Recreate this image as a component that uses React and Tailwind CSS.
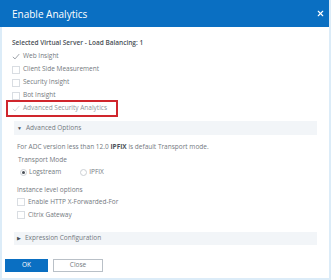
import { X } from "lucide-react";

function Check({ checked, faded }) {
  return (
    <span className={`w-[8px] h-[8px] flex items-center justify-center ${checked ? "" : "border border-[#d9dde2] bg-white"}`}>
      {checked && (
        <svg viewBox="0 0 10 10" className="w-[9px] h-[9px]">
          <path d="M1 5.5 L3.8 8 L9 2" fill="none" stroke={faded ? "#c9ced4" : "#858b93"} strokeWidth="1" />
        </svg>
      )}
    </span>
  );
}

function CheckRow({ label, checked, faded }) {
  return (
    <div className="h-[13px] flex items-center gap-[3px]">
      <Check checked={checked} faded={faded} />
      <span className={faded ? "text-[#8e959c]" : "text-[#737980]"}>{label}</span>
    </div>
  );
}

function Radio({ label, on }) {
  return (
    <div className="flex items-center gap-[2px]">
      <span className="w-[7px] h-[7px] rounded-full border border-[#cbd0d5] bg-white flex items-center justify-center">
        {on && <span className="w-[3px] h-[3px] rounded-full bg-[#4a5057]" />}
      </span>
      <span className="text-[#737980]">{label}</span>
    </div>
  );
}

export default function App() {
  return (
    <div className="w-[331px] h-[280px] bg-[#dcecf8] overflow-hidden" style={{ fontFamily: "'Open Sans', 'Noto Sans', sans-serif" }}>
      <div className="w-[329px] h-[278px] bg-white flex flex-col">
        {/* header */}
        <div className="h-[27px] bg-[#0a6fc2] flex items-center justify-between pl-[12px] pr-[4px]">
          <span className="text-white text-[10px] leading-none">Enable Analytics</span>
          <X className="w-[9px] h-[9px] text-white" strokeWidth={3} />
        </div>

        <div className="flex-1 border-l-2 border-[#dcecf8] flex flex-col text-[6.5px] leading-none">
          <div className="pl-[10px] pt-[10px]">
            <div className="h-[13px] flex items-center text-[#4a5057] font-semibold">
              Selected Virtual Server - Load Balancing: 1
            </div>
            <CheckRow label="Web Insight" checked />
            <CheckRow label="Client Side Measurement" />
            <CheckRow label="Security Insight" />
            <CheckRow label="Bot Insight" />
            <div className="relative">
              <CheckRow label="Advanced Security Analytics" checked faded />
              <span className="absolute -left-[6px] -top-[2px] w-[112px] h-[17px] border-2 border-[#d0262d]" />
            </div>

            {/* advanced options */}
            <div className="mt-[6px] ml-[2px] w-[303px] h-[14px] bg-[#f2f5f8] flex items-center pl-[3px] gap-[4px] text-[#737980]">
              <span className="text-[5px] text-[#4a5057]">▼</span>
              <span>Advanced Options</span>
            </div>
            <div className="pl-[5px] text-[#737980]">
              <div className="mt-[7px] h-[10px] flex items-center">
                For ADC version less than 12.0&nbsp;<b className="text-[#4a5057]">IPFIX</b>&nbsp;is default Transport mode.
              </div>
              <div className="mt-[3px] h-[10px] flex items-center pl-[1px]">Transport Mode</div>
              <div className="mt-[2px] h-[10px] flex items-center pl-[3px] gap-[19px]">
                <Radio label="Logstream" on />
                <Radio label="IPFIX" />
              </div>
              <div className="mt-[8px] h-[10px] flex items-center">Instance level options</div>
              <div className="mt-[2px] h-[10px] flex items-center gap-[3px]">
                <Check />
                <span>Enable HTTP X-Forwarded-For</span>
              </div>
              <div className="mt-[3px] h-[10px] flex items-center gap-[3px]">
                <Check />
                <span>Citrix Gateway</span>
              </div>
            </div>

            <div className="mt-[12px] ml-[2px] w-[303px] h-[13px] bg-[#f2f5f8] flex items-center pl-[3px] gap-[4px] text-[#737980]">
              <span className="text-[5px] text-[#4a5057]">▶</span>
              <span>Expression Configuration</span>
            </div>
          </div>

          {/* footer */}
          <div className="mt-[14px] pl-[3px] flex gap-[5px]">
            <button className="w-[43px] h-[13px] bg-[#0a6fc2] text-white text-[6.5px] leading-none">OK</button>
            <button className="w-[50px] h-[13px] bg-white border border-[#b9c0c7] text-[#737980] text-[6.5px] leading-none">Close</button>
          </div>
        </div>
      </div>
    </div>
  );
}
